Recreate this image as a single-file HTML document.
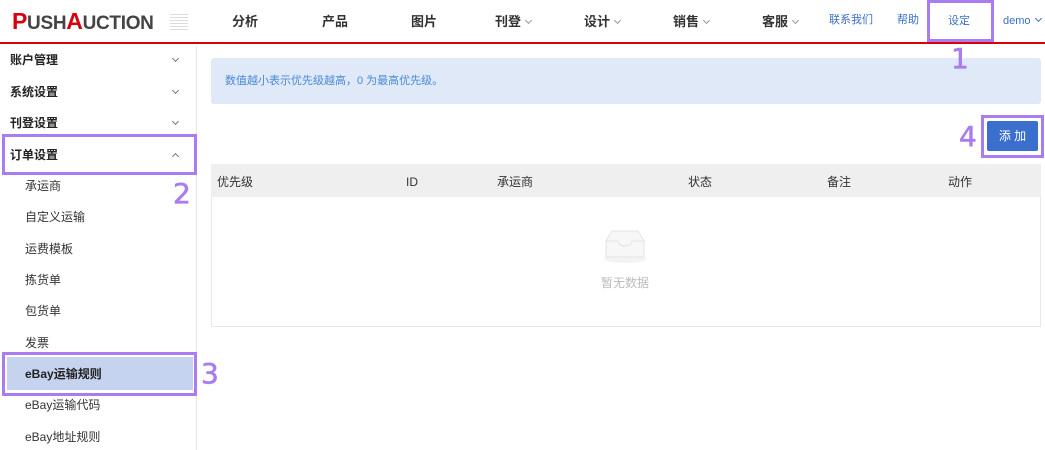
<!DOCTYPE html>
<html><head><meta charset="utf-8"><style>
*{margin:0;padding:0;box-sizing:border-box}
body{width:1045px;height:450px;overflow:hidden;background:#fff;font-family:"Liberation Sans","Noto Sans CJK SC",sans-serif;font-size:12px;color:#333;position:relative}
.a{position:absolute;white-space:nowrap;line-height:1}
.hdr{left:0;top:0;width:1045px;height:44px;border-bottom:2px solid #d9000e}
.nav{font-size:13px;font-weight:bold;color:#333;top:15px}
.chev{display:inline-block;width:5px;height:5px;border-right:1px solid #999;border-bottom:1px solid #999;transform:rotate(45deg);margin-left:5px;position:relative;top:-3px}
.sc{position:absolute;width:5px;height:5px;border-right:1px solid #777;border-bottom:1px solid #777;transform:rotate(45deg)}
.pbox{border:3px solid #a97cf2;z-index:5}
.num{color:#a97cf2;font-size:28px;font-family:"DejaVu Sans",sans-serif;line-height:1;z-index:6;-webkit-text-stroke:0.6px #a97cf2}
.side{font-size:12px}
.sb{font-weight:bold;color:#222}
.th{top:176px;font-size:12px;color:#333}
</style></head><body>
<div class="a hdr"></div>
<div class="a" style="left:12px;top:10px;font-size:23px;font-weight:bold;letter-spacing:-0.3px;color:#444"><span style="color:#d9000e">P</span><span style="font-size:19px">USH</span><span style="color:#d9000e">A</span><span style="font-size:19px">UCTION</span></div>
<div class="a" style="left:170px;top:14px;width:18px;height:16px;background:repeating-linear-gradient(#ddd 0 1px,#fff 1px 3px)"></div>
<div class="a nav" style="left:232px">分析</div>
<div class="a nav" style="left:322px">产品</div>
<div class="a nav" style="left:411px">图片</div>
<div class="a nav" style="left:495px">刊登<span class="chev"></span></div>
<div class="a nav" style="left:584px">设计<span class="chev"></span></div>
<div class="a nav" style="left:673px">销售<span class="chev"></span></div>
<div class="a nav" style="left:762px">客服<span class="chev"></span></div>
<div class="a" style="left:829px;top:15px;color:#3a6fc8;font-size:11px">联系我们</div>
<div class="a" style="left:897px;top:15px;color:#3a6fc8;font-size:11px">帮助</div>
<div class="a" style="left:948px;top:16px;color:#3a6fc8;font-size:11px">设定</div>
<div class="a" style="left:1003px;top:16px;color:#3a6fc8;font-size:11px">demo<span class="chev" style="border-color:#3a6fc8"></span></div>
<div class="a pbox" style="left:927px;top:0;width:67px;height:42px"></div>
<div class="a num" style="left:951px;top:45px">1</div>

<div class="a" style="left:196px;top:46px;width:1px;height:404px;background:#e6e6e6"></div>
<div class="a side sb" style="left:10px;top:54px">账户管理</div><span class="sc" style="left:173px;top:56px"></span>
<div class="a side sb" style="left:10px;top:86px">系统设置</div><span class="sc" style="left:173px;top:88px"></span>
<div class="a side sb" style="left:10px;top:117px">刊登设置</div><span class="sc" style="left:173px;top:119px"></span>
<div class="a side sb" style="left:10px;top:149px">订单设置</div><span class="sc" style="left:173px;top:154px;transform:rotate(225deg)"></span>
<div class="a pbox" style="left:2px;top:134px;width:195px;height:41px"></div>
<div class="a num" style="left:173px;top:180px">2</div>
<div class="a side" style="left:25px;top:180px">承运商</div>
<div class="a side" style="left:25px;top:211px">自定义运输</div>
<div class="a side" style="left:25px;top:243px">运费模板</div>
<div class="a side" style="left:25px;top:274px">拣货单</div>
<div class="a side" style="left:25px;top:305px">包货单</div>
<div class="a side" style="left:25px;top:337px">发票</div>
<div class="a" style="left:7px;top:357px;width:186px;height:33px;background:#c5d3ee"></div>
<div class="a side sb" style="left:25px;top:368px">eBay运输规则</div>
<div class="a pbox" style="left:2px;top:352px;width:195px;height:44px"></div>
<div class="a num" style="left:201px;top:360px">3</div>
<div class="a side" style="left:25px;top:399px">eBay运输代码</div>
<div class="a side" style="left:25px;top:431px">eBay地址规则</div>

<div class="a" style="left:211px;top:58px;width:830px;height:46px;background:#dfe9f7;border-radius:3px"></div>
<div class="a" style="left:225px;top:76px;color:#4a8ad8;font-size:11px">数值越小表示优先级越高，0 为最高优先级。</div>

<div class="a pbox" style="left:981px;top:115px;width:63px;height:43px"></div>
<div class="a" style="left:987px;top:121px;width:51px;height:30px;background:#3b6fce;border-radius:2px;color:#fff;font-size:12px;text-align:center;line-height:30px;z-index:6">添 加</div>
<div class="a num" style="left:959px;top:123px">4</div>

<div class="a" style="left:211px;top:164px;width:830px;height:33px;background:#efefef"></div>
<div class="a th" style="left:217px">优先级</div>
<div class="a th" style="left:406px">ID</div>
<div class="a th" style="left:497px">承运商</div>
<div class="a th" style="left:688px">状态</div>
<div class="a th" style="left:827px">备注</div>
<div class="a th" style="left:948px">动作</div>
<div class="a" style="left:211px;top:197px;width:830px;height:130px;border:1px solid #e8e8e8;border-top:none"></div>
<svg class="a" style="left:600px;top:229px" width="50" height="36" viewBox="0 0 50 36"><ellipse cx="25" cy="30" rx="21" ry="4" fill="#f3f3f3"/><path d="M6 12 L12 2 H38 L44 12 V28 H6 Z" fill="#f7f7f7" stroke="#e3e3e3"/><path d="M6 12 H18 A7 5 0 0 0 32 12 H44" fill="none" stroke="#e3e3e3"/></svg>
<div class="a" style="left:601px;top:277px;color:#bbb;font-size:12px">暂无数据</div>
</body></html>
